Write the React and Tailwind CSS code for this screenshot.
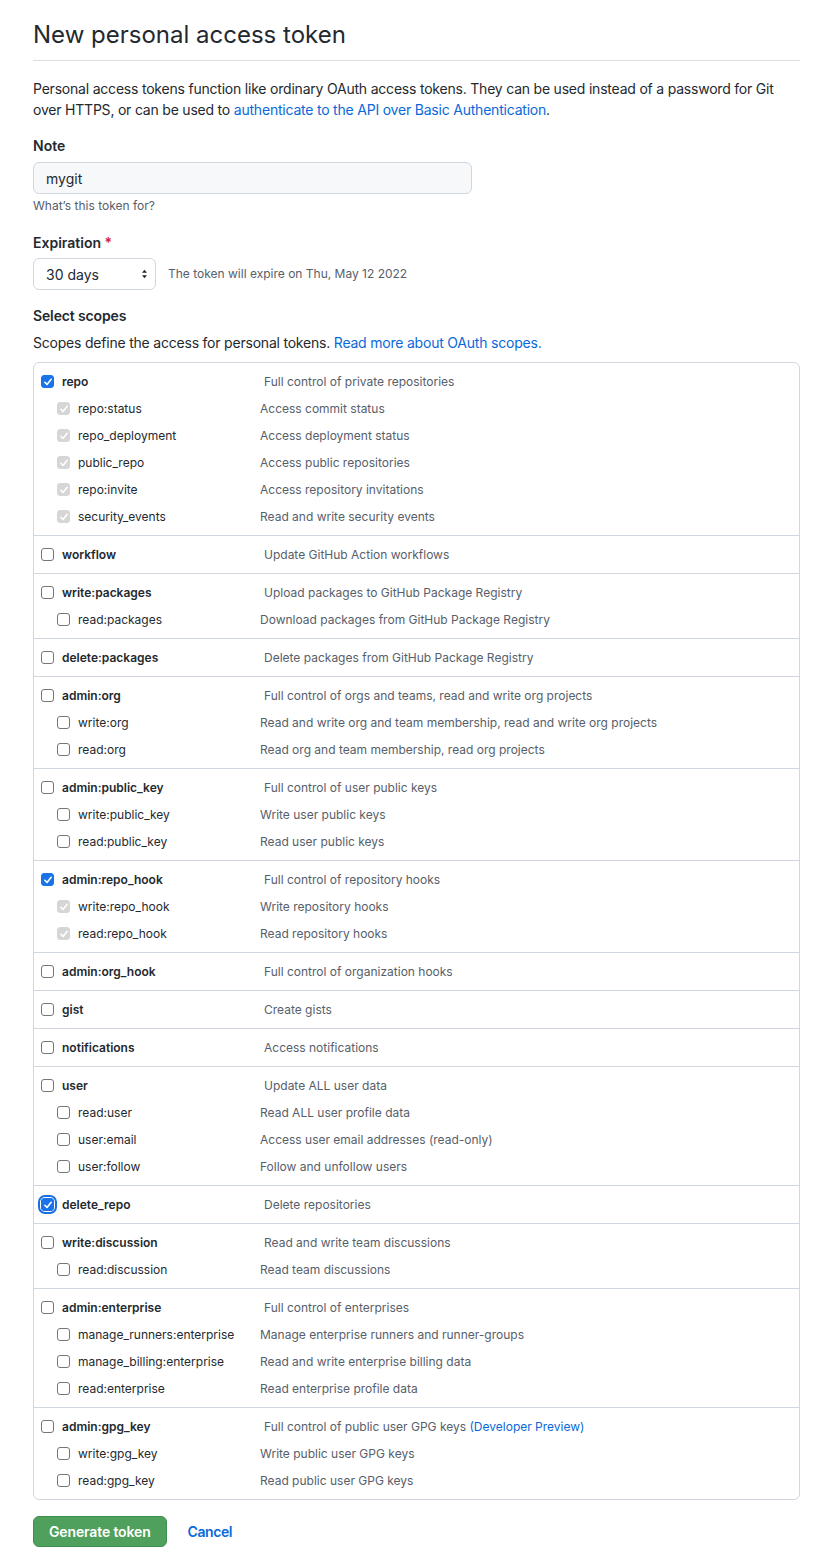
import React from 'react';

const scopeGroups = [
  {
    name: 'repo', desc: 'Full control of private repositories', checked: true,
    children: [
      ['repo:status', 'Access commit status'],
      ['repo_deployment', 'Access deployment status'],
      ['public_repo', 'Access public repositories'],
      ['repo:invite', 'Access repository invitations'],
      ['security_events', 'Read and write security events'],
    ],
  },
  { name: 'workflow', desc: 'Update GitHub Action workflows' },
  {
    name: 'write:packages', desc: 'Upload packages to GitHub Package Registry',
    children: [['read:packages', 'Download packages from GitHub Package Registry']],
  },
  { name: 'delete:packages', desc: 'Delete packages from GitHub Package Registry' },
  {
    name: 'admin:org', desc: 'Full control of orgs and teams, read and write org projects',
    children: [
      ['write:org', 'Read and write org and team membership, read and write org projects'],
      ['read:org', 'Read org and team membership, read org projects'],
    ],
  },
  {
    name: 'admin:public_key', desc: 'Full control of user public keys',
    children: [
      ['write:public_key', 'Write user public keys'],
      ['read:public_key', 'Read user public keys'],
    ],
  },
  {
    name: 'admin:repo_hook', desc: 'Full control of repository hooks', checked: true,
    children: [
      ['write:repo_hook', 'Write repository hooks'],
      ['read:repo_hook', 'Read repository hooks'],
    ],
  },
  { name: 'admin:org_hook', desc: 'Full control of organization hooks' },
  { name: 'gist', desc: 'Create gists' },
  { name: 'notifications', desc: 'Access notifications' },
  {
    name: 'user', desc: 'Update ALL user data',
    children: [
      ['read:user', 'Read ALL user profile data'],
      ['user:email', 'Access user email addresses (read-only)'],
      ['user:follow', 'Follow and unfollow users'],
    ],
  },
  { name: 'delete_repo', desc: 'Delete repositories', checked: true, focused: true },
  {
    name: 'write:discussion', desc: 'Read and write team discussions',
    children: [['read:discussion', 'Read team discussions']],
  },
  {
    name: 'admin:enterprise', desc: 'Full control of enterprises',
    children: [
      ['manage_runners:enterprise', 'Manage enterprise runners and runner-groups'],
      ['manage_billing:enterprise', 'Read and write enterprise billing data'],
      ['read:enterprise', 'Read enterprise profile data'],
    ],
  },
  {
    name: 'admin:gpg_key', desc: 'Full control of public user GPG keys', preview: true,
    children: [
      ['write:gpg_key', 'Write public user GPG keys'],
      ['read:gpg_key', 'Read public user GPG keys'],
    ],
  },
];

function Check({ state, focused }) {
  // state: 'on' | 'off' | 'disabled'
  const box =
    state === 'on'
      ? 'bg-[#1a73e8] border-[#1a73e8]'
      : state === 'disabled'
      ? 'bg-[#d6d6d6] border-[#d6d6d6]'
      : 'bg-white border-[#767676]';
  return (
    <span className={`relative inline-flex shrink-0 ${focused ? 'rounded-[4px] outline-2 outline-[#1a6fe0] outline-offset-[1px]' : ''}`}>
      <span className={`flex h-[13px] w-[13px] items-center justify-center rounded-[3px] border ${box}`}>
        {state !== 'off' && (
          <svg viewBox="0 0 12 12" className="h-[10px] w-[10px]">
            <path d="M2.2 6.3 L4.8 8.9 L9.8 2.8" fill="none" stroke="white" strokeWidth="1.9" strokeLinecap="round" strokeLinejoin="round" />
          </svg>
        )}
      </span>
    </span>
  );
}

function ScopeGroup({ group, first }) {
  return (
    <div className={`py-[5px] ${first ? '' : 'border-t border-[#d0d7de]'}`}>
      <div className="flex h-[27px] items-center text-[12px]">
        <div className="flex w-[230px] shrink-0 items-center pl-[7px]">
          <Check state={group.checked ? 'on' : 'off'} focused={group.focused} />
          <span className="ml-[8px] font-semibold text-[#24292f]">{group.name}</span>
        </div>
        <div className="text-[#57606a]">
          {group.desc}
          {group.preview && <span className="text-[#0969da]"> (Developer Preview)</span>}
        </div>
      </div>
      {(group.children || []).map(([name, desc]) => (
        <div key={name} className="flex h-[27px] items-center text-[12px]">
          <div className="flex w-[226px] shrink-0 items-center pl-[23px]">
            <Check state={group.checked ? 'disabled' : 'off'} />
            <span className="ml-[8px] text-[#24292f]">{name}</span>
          </div>
          <div className="text-[#57606a]">{desc}</div>
        </div>
      ))}
    </div>
  );
}

export default function App() {
  return (
    <div className="min-h-[1560px] bg-white pl-[33px] pr-[18px] pt-[17px] text-[#24292f] font-['Inter','Liberation_Sans',sans-serif]">
      <h1 className="border-b border-[#d8dee4] pb-[7px] text-[24px] leading-[36px] font-normal">
        New personal access token
      </h1>

      <p className="mt-[17px] text-[14px] leading-[21px] tracking-[-0.015em]">
        Personal access tokens function like ordinary OAuth access tokens. They can be used instead of a password for Git over HTTPS, or can be used to{' '}
        <a href="#" className="text-[#0969da]">authenticate to the API over Basic Authentication</a>.
      </p>

      <div className="mt-[15px] text-[14px] leading-[21px] font-semibold">Note</div>
      <div className="mt-[6px] flex h-[32px] w-[439px] items-center rounded-[6px] border border-[#d0d7de] bg-[#f6f8fa] px-[12px] text-[14px]">
        mygit
      </div>
      <div className="mt-[3px] text-[12px] leading-[18px] text-[#57606a]">What’s this token for?</div>

      <div className="mt-[17px] text-[14px] leading-[21px] font-semibold">
        Expiration <span className="text-[#cf222e]">*</span>
      </div>
      <div className="mt-[5px] flex items-center">
        <div className="flex h-[32px] w-[123px] items-center justify-between rounded-[6px] border border-[#d0d7de] bg-white pl-[12px] pr-[7px] text-[14px]">
          <span>30 days</span>
          <svg viewBox="0 0 8 12" className="h-[10px] w-[7px]">
            <path d="M4 1 L7 4.6 H1 Z" fill="#24292f" />
            <path d="M4 11 L7 7.4 H1 Z" fill="#24292f" />
          </svg>
        </div>
        <span className="ml-[12px] text-[12px] text-[#57606a]">The token will expire on Thu, May 12 2022</span>
      </div>

      <div className="mt-[15px] text-[14px] leading-[21px] font-semibold tracking-[-0.01em]">Select scopes</div>
      <p className="mt-[6px] text-[14px] leading-[21px] tracking-[-0.015em]">
        Scopes define the access for personal tokens.{' '}
        <a href="#" className="text-[#0969da]">Read more about OAuth scopes.</a>
      </p>

      <div className="mt-[9px] rounded-[6px] border border-[#d0d7de]">
        {scopeGroups.map((g, i) => (
          <ScopeGroup key={g.name} group={g} first={i === 0} />
        ))}
      </div>

      <div className="mt-[16px] flex items-center">
        <button className="h-[31px] rounded-[6px] border border-[#3f8f4d] bg-[#4fa05c] px-[15px] text-[14px] font-semibold tracking-[-0.01em] text-white">
          Generate token
        </button>
        <a href="#" className="ml-[21px] text-[14px] font-semibold tracking-[-0.03em] text-[#0969da]">Cancel</a>
      </div>
    </div>
  );
}
